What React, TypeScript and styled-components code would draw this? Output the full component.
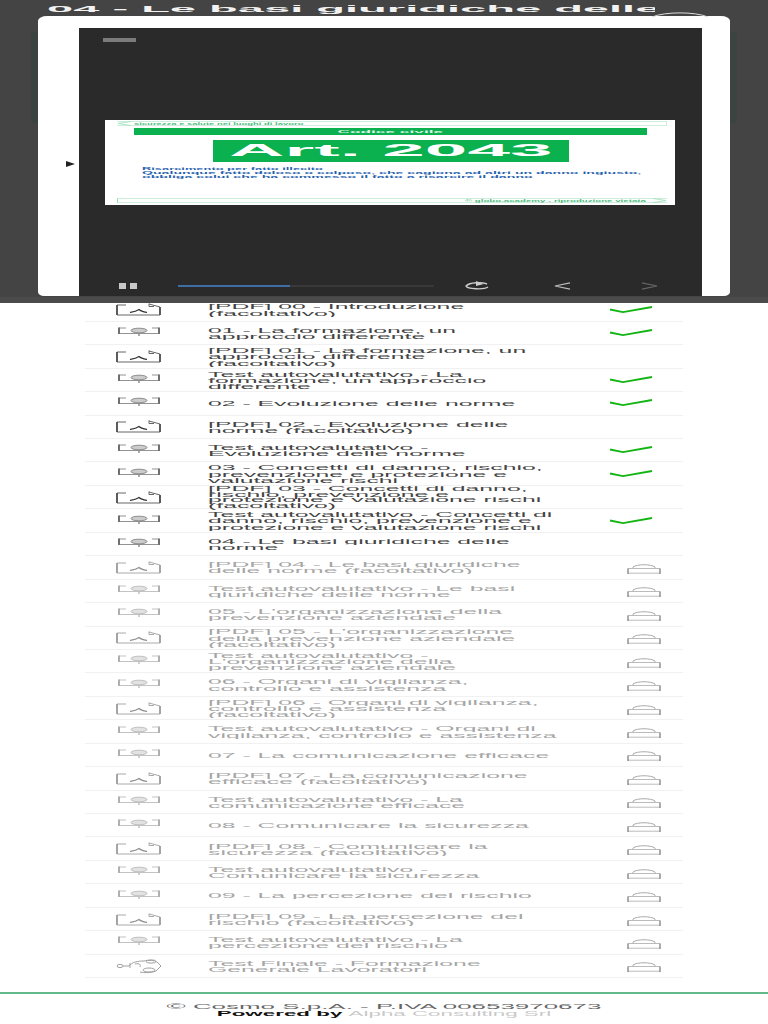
import React from 'react'
import styled, { createGlobalStyle } from 'styled-components'

const Global = createGlobalStyle`
  html, body { margin: 0; padding: 0; background: #fff; }
  body { font-family: "Liberation Sans", Arial, sans-serif; }
`

const Page = styled.div`
  width: 768px;
  height: 1024px;
  overflow: hidden;
  background: #fff;
`

const Header = styled.header`
  position: relative;
  z-index: 2;
  height: 303px;
  background: linear-gradient(#444 0, #444 297px, #4b4b4b 297px);
  box-sizing: border-box;
  padding-top: 16px;
`

const TitleClip = styled.div`
  position: absolute;
  left: 47px;
  top: 0;
  width: 608px;
  height: 16px;
  overflow: hidden;
`

const Title = styled.div`
  font-size: 16px;
  line-height: 16px;
  font-weight: 700;
  color: #f2f2f2;
  white-space: nowrap;
  padding-top: 6px;
  transform: scale(2.94, 0.62);
  transform-origin: left top;
`

const BackPanel = styled.div`
  position: absolute;
  left: 31px;
  top: 32px;
  width: 706px;
  height: 91px;
  background: #3d4340;
`

const Modal = styled.div`
  position: relative;
  width: 692px;
  height: 280px;
  margin-left: 38px;
  background: #fff;
  border-radius: 9px 9px 6px 6px / 5px 5px 4px 4px;
  box-sizing: border-box;
  padding: 12px 28px 0 41px;
`

const CloseArc = styled.svg`
  position: absolute;
  left: 612px;
  top: -4px;
`

const PlayMark = styled.svg`
  position: absolute;
  left: 28px;
  top: 145px;
`

const Player = styled.div`
  height: 268px;
  background: #2a2a2a;
  display: flex;
  flex-direction: column;
  padding: 10px 0 0 24px;
  box-sizing: border-box;
`

const Tag = styled.div`
  width: 33px;
  height: 4px;
  background: #7b7b7b;
`

const Slide = styled.div`
  width: 570px;
  height: 85px;
  margin: 78px 0 0 2px;
  background: #fff;
  box-sizing: border-box;
  padding: 1px 8px 0 12px;
  display: flex;
  flex-direction: column;
`

const SlideTop = styled.div`
  position: relative;
  height: 3px;
  border: 1px solid #cdeeda;
  border-left: 0;
  font-size: 4px;
  line-height: 4px;
  color: #4dbb80;
  padding-left: 17px;
  white-space: nowrap;
`

const TopArrow = styled.svg`
  position: absolute;
  left: 0;
  top: -1px;
`

const TinyText = styled.span<{ $sx: number; $origin?: string }>`
  display: inline-block;
  font-weight: 700;
  transform: scale(${p => p.$sx}, 0.8);
  transform-origin: ${p => p.$origin || 'left'} center;
`

const CivilBar = styled.div`
  height: 7px;
  margin: 2px 20px 0 17px;
  background: #0bb04f;
  color: #dff5e8;
  font-size: 5px;
  line-height: 7px;
  font-weight: 700;
  display: flex;
  justify-content: center;
`

const ArtBox = styled.div`
  width: 356px;
  height: 22px;
  margin: 5px 0 0 96px;
  background: #0bb04f;
  color: #fff;
  font-size: 17px;
  line-height: 22px;
  font-weight: 700;
  display: flex;
  justify-content: center;
`

const ArtText = styled.span`
  display: block;
  white-space: nowrap;
  transform: scale(4.5, 0.92);
`

const Legal = styled.div`
  margin: 5px 0 0 25px;
  width: 498px;
  color: #1f5fae;
  font-size: 4.5px;
  line-height: 3.8px;
  font-weight: 700;
`

const LegalLine = styled.div<{ $sx: number }>`
  white-space: nowrap;
  transform: scale(${p => p.$sx}, 0.78);
  transform-origin: left center;
`

const SlideBottom = styled.div`
  position: relative;
  height: 3px;
  margin-top: auto;
  margin-bottom: 2px;
  border-top: 1px solid #cdeeda;
  border-bottom: 1px solid #cdeeda;
  border-left: 1px solid #8edbb0;
  display: flex;
  justify-content: flex-end;
  font-size: 4px;
  line-height: 4px;
  color: #4dbb80;
  padding-right: 127px;
  white-space: nowrap;
`

const BottomArrow = styled.svg`
  position: absolute;
  right: 0;
  top: -1px;
`

const Controls = styled.div`
  display: flex;
  align-items: center;
  margin-top: 76px;
  margin-left: 16px;
`

const Pause = styled.div`
  width: 18px;
  display: flex;
  gap: 4px;
`

const PauseBar = styled.span`
  width: 7px;
  height: 6px;
  background: #c8c8c8;
`

const Track = styled.div`
  width: 256px;
  height: 2px;
  margin-left: 41px;
  background: #383838;
`

const TrackFill = styled.div`
  height: 100%;
  background: #3f6ea6;
`

const CtrlIcon = styled.svg`
  display: block;
  margin-left: 30px;
`

const NextIcon = styled(CtrlIcon)`
  margin-left: 70px;
`

const PrevIcon = styled(CtrlIcon)`
  margin-left: 63px;
`

const List = styled.ul`
  list-style: none;
  width: 598px;
  margin: -4.6px auto 0;
  padding: 0;
`

const Row = styled.li<{ $locked: boolean }>`
  height: 23.45px;
  box-sizing: border-box;
  border-bottom: 1px solid #f1f1f1;
  display: grid;
  grid-template-columns: 123px 392px 1fr;
  align-items: center;
  color: ${p => (p.$locked ? '#a6a6a6' : '#444')};
`

const IconCell = styled.div<{ $locked: boolean; $raised: boolean }>`
  display: flex;
  justify-content: center;
  padding-right: 16px;
  box-sizing: border-box;
  padding-bottom: ${p => (p.$raised ? '3px' : '0')};
  opacity: ${p => (p.$locked ? 0.55 : 1)};
`

const TextCell = styled.div`
  font-size: 10.5px;
  white-space: nowrap;
`

const TextLine = styled.div<{ $pitch: number }>`
  height: ${p => p.$pitch}px;
  line-height: ${p => p.$pitch}px;
  transform: scale(2.36, 0.62);
  transform-origin: left center;
`

const StateCell = styled.div`
  display: flex;
  align-items: center;
`

const Check = styled.svg`
  display: block;
  margin-left: 9px;
`

const Lock = styled.svg`
  display: block;
  margin-left: 27px;
  margin-top: 3px;
`

const Footer = styled.footer`
  margin-top: 13.5px;
  border-top: 2px solid #62b98a;
  padding-top: 9px;
  text-align: center;
  color: #666;
  font-size: 10.5px;
  line-height: 7.5px;
`

const FootLine = styled.div`
  white-space: nowrap;
  transform: scale(2.47, 0.62);
`

const Powered = styled(FootLine)`
  color: #111;
  font-weight: 700;
  transform: scale(2.13, 0.62);
`

const Faded = styled.span`
  color: #c9c9c9;
  font-weight: 400;
`

const PdfIcon = () => (
  <svg width="45" height="13" viewBox="0 0 45 13" fill="none">
    <path d="M1 2V12M44 4V12" stroke="#333" strokeWidth="1.6" />
    <path d="M1 12H44M1 2H10M33 1L44 4" stroke="#555" strokeWidth="0.9" />
    <path d="M33 .5V3.5H38" stroke="#555" strokeWidth="0.9" />
    <path d="M14 9.5C18 8.8 20 8.5 23 6.5C25 8.5 27 8.8 31 9.5" stroke="#333" strokeWidth="1.2" />
  </svg>
)

const VideoIcon = () => (
  <svg width="42" height="9" viewBox="0 0 42 9" fill="none">
    <path d="M1 .5V7M41 .5V7" stroke="#333" strokeWidth="1.4" />
    <path d="M1 1H8M34 1H41M1 6.5H41" stroke="#777" strokeWidth="0.8" />
    <ellipse cx="21" cy="3.5" rx="8" ry="2.3" fill="#ccc" stroke="#777" strokeWidth="0.8" />
    <path d="M21 7V9" stroke="#555" strokeWidth="1" />
  </svg>
)

const PigIcon = () => (
  <svg width="46" height="16" viewBox="0 0 46 16" fill="none" stroke="#555">
    <ellipse cx="4" cy="8" rx="3" ry="1.6" strokeWidth="1" />
    <path d="M7 8H13C16 4 22 3 28 3C33 2 38 2 41 4L45 8L40 13C36 15 28 15 24 14" strokeWidth="1" />
    <ellipse cx="35" cy="3.5" rx="5" ry="1.6" strokeWidth="1" />
    <ellipse cx="33" cy="12" rx="6" ry="2" strokeWidth="1" />
    <path d="M19 6C24 5 25 7 24 9" strokeWidth="1" />
    <path d="M14 5V10" strokeWidth="1" />
  </svg>
)

const CheckMark = () => (
  <Check width="44" height="8" viewBox="0 0 44 8" fill="none">
    <path d="M1 3.5L14 6.2L43 1" stroke="#12b512" strokeWidth="1.8" />
  </Check>
)

const LockMark = () => (
  <Lock width="34" height="10" viewBox="0 0 34 10" fill="none">
    <path d="M1 9.2H33M1 4.5H33" stroke="#bbb" strokeWidth="1" />
    <path d="M6 4V3C10 0 24 0 28 3V4" stroke="#aaa" strokeWidth="1" />
    <path d="M1 4.5V10M33 4.5V10" stroke="#888" strokeWidth="1.4" />
  </Lock>
)

type Kind = 'pdf' | 'video' | 'final'

interface Lesson {
  kind: Kind
  lines: string[]
  state: 'done' | 'open' | 'locked'
}

const lessons: Lesson[] = [
  { kind: 'pdf', state: 'done', lines: ['[PDF] 00 - Introduzione', '(facoltativo)'] },
  { kind: 'video', state: 'done', lines: ['01 - La formazione, un', 'approccio differente'] },
  { kind: 'pdf', state: 'open', lines: ['[PDF] 01 - La formazione, un', 'approccio differente', '(facoltativo)'] },
  { kind: 'video', state: 'done', lines: ['Test autovalutativo - La', 'formazione, un approccio', 'differente'] },
  { kind: 'video', state: 'done', lines: ['02 - Evoluzione delle norme'] },
  { kind: 'pdf', state: 'open', lines: ['[PDF] 02 - Evoluzione delle', 'norme (facoltativo)'] },
  { kind: 'video', state: 'done', lines: ['Test autovalutativo -', 'Evoluzione delle norme'] },
  { kind: 'video', state: 'done', lines: ['03 - Concetti di danno, rischio,', 'prevenzione e protezione e', 'valutazione rischi'] },
  { kind: 'pdf', state: 'open', lines: ['[PDF] 03 - Concetti di danno,', 'rischio, prevenzione e', 'protezione e valutazione rischi', '(facoltativo)'] },
  { kind: 'video', state: 'done', lines: ['Test autovalutativo - Concetti di', 'danno, rischio, prevenzione e', 'protezione e valutazione rischi'] },
  { kind: 'video', state: 'open', lines: ['04 - Le basi giuridiche delle', 'norme'] },
  { kind: 'pdf', state: 'locked', lines: ['[PDF] 04 - Le basi giuridiche', 'delle norme (facoltativo)'] },
  { kind: 'video', state: 'locked', lines: ['Test autovalutativo - Le basi', 'giuridiche delle norme'] },
  { kind: 'video', state: 'locked', lines: ["05 - L'organizzazione della", 'prevenzione aziendale'] },
  { kind: 'pdf', state: 'locked', lines: ["[PDF] 05 - L'organizzazione", 'della prevenzione aziendale', '(facoltativo)'] },
  { kind: 'video', state: 'locked', lines: ['Test autovalutativo -', "L'organizzazione della", 'prevenzione aziendale'] },
  { kind: 'video', state: 'locked', lines: ['06 - Organi di vigilanza,', 'controllo e assistenza'] },
  { kind: 'pdf', state: 'locked', lines: ['[PDF] 06 - Organi di vigilanza,', 'controllo e assistenza', '(facoltativo)'] },
  { kind: 'video', state: 'locked', lines: ['Test autovalutativo - Organi di', 'vigilanza, controllo e assistenza'] },
  { kind: 'video', state: 'locked', lines: ['07 - La comunicazione efficace'] },
  { kind: 'pdf', state: 'locked', lines: ['[PDF] 07 - La comunicazione', 'efficace (facoltativo)'] },
  { kind: 'video', state: 'locked', lines: ['Test autovalutativo - La', 'comunicazione efficace'] },
  { kind: 'video', state: 'locked', lines: ['08 - Comunicare la sicurezza'] },
  { kind: 'pdf', state: 'locked', lines: ['[PDF] 08 - Comunicare la', 'sicurezza (facoltativo)'] },
  { kind: 'video', state: 'locked', lines: ['Test autovalutativo -', 'Comunicare la sicurezza'] },
  { kind: 'video', state: 'locked', lines: ['09 - La percezione del rischio'] },
  { kind: 'pdf', state: 'locked', lines: ['[PDF] 09 - La percezione del', 'rischio (facoltativo)'] },
  { kind: 'video', state: 'locked', lines: ['Test autovalutativo - La', 'percezione del rischio'] },
  { kind: 'final', state: 'locked', lines: ['Test Finale - Formazione', 'Generale Lavoratori'] },
]

const icons = { pdf: PdfIcon, video: VideoIcon, final: PigIcon }

const App = () => (
  <Page>
    <Global />
    <Header>
      <TitleClip>
        <Title>04 - Le basi giuridiche delle norme</Title>
      </TitleClip>
      <BackPanel />
      <Modal>
        <CloseArc width="60" height="6" viewBox="0 0 60 6" fill="none">
          <path d="M2 5C15 -.5 45 -.5 58 5" stroke="#ddd" strokeWidth="1" />
        </CloseArc>
        <PlayMark width="10" height="6" viewBox="0 0 10 6">
          <path d="M0 0L9 3L0 6Z" fill="#222" />
        </PlayMark>
        <Player>
          <Tag />
          <Slide>
            <SlideTop>
              <TopArrow width="14" height="5" viewBox="0 0 14 5" fill="none">
                <path d="M14 .5L1 2.5L14 4.5" stroke="#9fe0bb" strokeWidth="0.8" />
              </TopArrow>
              <TinyText $sx={2.36}>sicurezza e salute nei luoghi di lavoro</TinyText>
            </SlideTop>
            <CivilBar>
              <TinyText $sx={3.46} $origin="center">Codice civile</TinyText>
            </CivilBar>
            <ArtBox>
              <ArtText>Art. 2043</ArtText>
            </ArtBox>
            <Legal>
              <LegalLine $sx={2.86}>Risarcimento per fatto illecito</LegalLine>
              <LegalLine $sx={3.14}>Qualunque fatto doloso o colposo, che cagiona ad altri un danno ingiusto,</LegalLine>
              <LegalLine $sx={3.15}>obbliga colui che ha commesso il fatto a risarcire il danno</LegalLine>
            </Legal>
            <SlideBottom>
              <TinyText $sx={2.42}>© globo.academy - riproduzione vietata</TinyText>
              <BottomArrow width="14" height="5" viewBox="0 0 14 5" fill="none">
                <path d="M0 .5L13 2.5L0 4.5" stroke="#9fe0bb" strokeWidth="0.8" />
              </BottomArrow>
            </SlideBottom>
          </Slide>
          <Controls>
            <Pause>
              <PauseBar />
              <PauseBar />
            </Pause>
            <Track>
              <TrackFill style={{ width: `${(112 / 256) * 100}%` }} />
            </Track>
            <CtrlIcon width="26" height="10" viewBox="0 0 26 10" fill="none">
              <path d="M23 3C18 1 6 1 2 5C3 8 20 9 24 6" stroke="#ccc" strokeWidth="1.4" />
              <path d="M12 0L20 3L12 5Z" fill="#ccc" />
            </CtrlIcon>
            <PrevIcon width="18" height="8" viewBox="0 0 18 8" fill="none">
              <path d="M17 .8L2 4L17 7.2" stroke="#bbb" strokeWidth="1.2" />
            </PrevIcon>
            <NextIcon width="18" height="8" viewBox="0 0 18 8" fill="none">
              <path d="M1 .8L16 4L1 7.2" stroke="#666" strokeWidth="1.2" />
            </NextIcon>
          </Controls>
        </Player>
      </Modal>
    </Header>
    <List>
      {lessons.map(lesson => {
        const Icon = icons[lesson.kind]
        const locked = lesson.state === 'locked'
        const pitch = lesson.lines.length > 3 ? 5.5 : 6.2
        return (
          <Row key={lesson.lines.join(' ')} $locked={locked}>
            <IconCell $locked={locked} $raised={lesson.kind === 'video'}>
              <Icon />
            </IconCell>
            <TextCell>
              {lesson.lines.map(line => (
                <TextLine key={line} $pitch={pitch}>{line}</TextLine>
              ))}
            </TextCell>
            <StateCell>
              {lesson.state === 'done' && <CheckMark />}
              {locked && <LockMark />}
            </StateCell>
          </Row>
        )
      })}
    </List>
    <Footer>
      <FootLine>© Cosmo S.p.A. - P.IVA 00653970673</FootLine>
      <Powered>
        Powered by <Faded>Alpha Consulting Srl</Faded>
      </Powered>
    </Footer>
  </Page>
)

export default App
